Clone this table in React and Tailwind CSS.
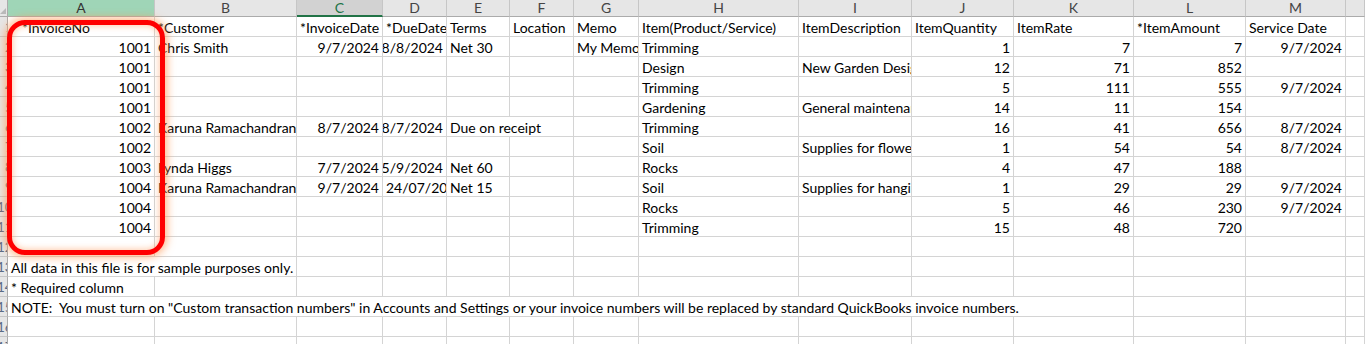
const COLS = ['A', 'B', 'C', 'D', 'E', 'F', 'G', 'H', 'I', 'J', 'K', 'L', 'M', ''];

// each row: [value, align 'r' | 'l' | 'i' (indented), span]
const header = ['*InvoiceNo', '*Customer', '*InvoiceDate', '*DueDate', 'Terms', 'Location', 'Memo', 'Item(Product/Service)', 'ItemDescription', 'ItemQuantity', 'ItemRate', '*ItemAmount', 'Service Date', ''];

const rows = [
  header.map((t, i) => [t, i === 0 ? 'i' : 'l']),
  [['1001', 'r'], ['Chris Smith'], ['9/7/2024', 'r'], ['8/8/2024', 'r'], ['Net 30'], [''], ['My Memo'], ['Trimming'], [''], ['1', 'r'], ['7', 'r'], ['7', 'r'], ['9/7/2024', 'r'], ['']],
  [['1001', 'r'], [''], [''], [''], [''], [''], [''], ['Design'], ['New Garden Design for the back yard'], ['12', 'r'], ['71', 'r'], ['852', 'r'], [''], ['']],
  [['1001', 'r'], [''], [''], [''], [''], [''], [''], ['Trimming'], [''], ['5', 'r'], ['111', 'r'], ['555', 'r'], ['9/7/2024', 'r'], ['']],
  [['1001', 'r'], [''], [''], [''], [''], [''], [''], ['Gardening'], ['General maintenance'], ['14', 'r'], ['11', 'r'], ['154', 'r'], [''], ['']],
  [['1002', 'r'], ['Karuna Ramachandran'], ['8/7/2024', 'r'], ['8/7/2024', 'r'], ['Due on receipt', 'l', 2], [''], ['Trimming'], [''], ['16', 'r'], ['41', 'r'], ['656', 'r'], ['8/7/2024', 'r'], ['']],
  [['1002', 'r'], [''], [''], [''], [''], [''], [''], ['Soil'], ['Supplies for flowers'], ['1', 'r'], ['54', 'r'], ['54', 'r'], ['8/7/2024', 'r'], ['']],
  [['1003', 'r'], ['Lynda Higgs'], ['7/7/2024', 'r'], ['5/9/2024', 'r'], ['Net 60'], [''], [''], ['Rocks'], [''], ['4', 'r'], ['47', 'r'], ['188', 'r'], [''], ['']],
  [['1004', 'r'], ['Karuna Ramachandran'], ['9/7/2024', 'r'], ['24/07/2024'], ['Net 15'], [''], [''], ['Soil'], ['Supplies for hanging baskets'], ['1', 'r'], ['29', 'r'], ['29', 'r'], ['9/7/2024', 'r'], ['']],
  [['1004', 'r'], [''], [''], [''], [''], [''], [''], ['Rocks'], [''], ['5', 'r'], ['46', 'r'], ['230', 'r'], ['9/7/2024', 'r'], ['']],
  [['1004', 'r'], [''], [''], [''], [''], [''], [''], ['Trimming'], [''], ['15', 'r'], ['48', 'r'], ['720', 'r'], [''], ['']],
  COLS.map(() => ['']),
  [['All data in this file is for sample purposes only.', 'l', 2], [''], [''], [''], [''], [''], [''], [''], [''], [''], [''], [''], ['']],
  [['* Required column'], [''], [''], [''], [''], [''], [''], [''], [''], [''], [''], [''], [''], ['']],
  [['NOTE:  You must turn on "Custom transaction numbers" in Accounts and Settings or your invoice numbers will be replaced by standard QuickBooks invoice numbers.', 'l', 11], [''], [''], ['']],
  COLS.map(() => ['']),
  COLS.map(() => ['']),
];

const spanClass = { 1: 'col-span-1', 2: 'col-span-2', 3: 'col-span-3', 11: 'col-span-11' };
const alignClass = {
  r: 'justify-end pr-[3px]',
  l: 'justify-start pl-[3px]',
  i: 'justify-start pl-[14px]',
};

function Cell({ value, align, span }) {
  return (
    <div
      className={`${spanClass[span || 1]} h-[20px] border-r border-b border-[#d4d4d4] overflow-hidden whitespace-pre flex items-end ${
        alignClass[align || 'l']
      }`}
    >
      <span className="leading-[16px]">{value}</span>
    </div>
  );
}

export default function App() {
  return (
    <div
      className="relative w-[1365px] h-[344px] overflow-hidden bg-white text-[14px] text-black"
      style={{ fontFamily: 'Lato, "Open Sans", sans-serif' }}
    >
      <div className="grid grid-cols-[8px_147px_142px_86px_64px_63px_64px_65px_160px_113px_102px_120px_112px_100px_1fr]">
        {/* ---- COLUMN HEADERS ---- */}
        <div className="relative h-[17px] bg-[#e6e6e6] border-r border-b border-[#ababab]">
          <div className="absolute right-[1px] bottom-[2px] w-0 h-0 border-l-[6px] border-l-transparent border-b-[6px] border-b-[#b9b9b9]" />
        </div>
        {COLS.map((c) => (
          <div
            key={c || 'N'}
            className={`h-[17px] flex items-center justify-center text-[14px] leading-none border-r border-[#c6c6c6] ${
              c === 'A'
                ? 'bg-[#9fd5b7] text-[#333] border-b border-b-[#ababab]'
                : c === 'C'
                ? 'bg-[#d2d2d2] text-[#217346] border-b-2 border-b-[#217346]'
                : 'bg-[#e6e6e6] text-[#444] border-b border-b-[#ababab]'
            }`}
          >
            {c}
          </div>
        ))}

        {/* ---- ROWS ---- */}
        {rows.map((r, i) => [
          <div
            key={`h${i}`}
            className="h-[20px] bg-[#e6e6e6] border-r border-r-[#ababab] border-b border-b-[#c6c6c6] overflow-hidden flex items-center justify-end text-[14px] text-[#5a6a85] leading-none"
          >
            <span className="mr-[-6px]">{i + 1}</span>
          </div>,
          ...r.map(([v, a, s], j) => <Cell key={`${i}-${j}`} value={v} align={a} span={s} />),
        ])}
      </div>

      {/* ---- HIGHLIGHT BOX ---- */}
      <div className="absolute left-[7px] top-[20px] w-[158px] h-[235px] rounded-[18px] border-[5px] border-[#ff0000] shadow-[0_0_8px_2px_rgba(255,150,80,0.7),inset_0_0_6px_1px_rgba(255,160,100,0.55)] pointer-events-none" />
    </div>
  );
}
